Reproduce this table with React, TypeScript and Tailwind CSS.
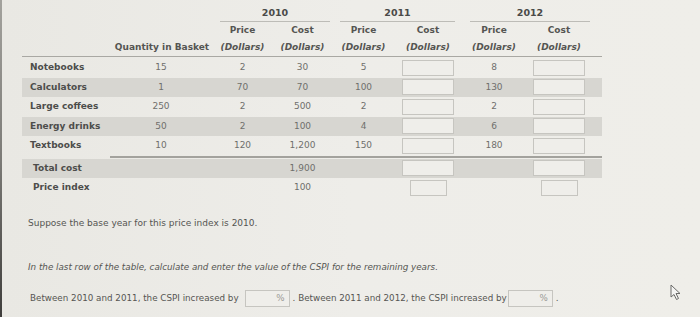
import React from 'react';

// one row of the basket table: label, quantity, then price/cost for each year
type Cell = string | 'box' | 'small' | '';

interface RowData {
    label: string;
    cells: Cell[];
    shaded?: boolean;
}

const ROWS: RowData[] = [
    { label: 'Notebooks', cells: ['15', '2', '30', '5', 'box', '8', 'box'] },
    { label: 'Calculators', cells: ['1', '70', '70', '100', 'box', '130', 'box'], shaded: true },
    { label: 'Large coffees', cells: ['250', '2', '500', '2', 'box', '2', 'box'] },
    { label: 'Energy drinks', cells: ['50', '2', '100', '4', 'box', '6', 'box'], shaded: true },
    { label: 'Textbooks', cells: ['10', '120', '1,200', '150', 'box', '180', 'box'] },
];

const SUMMARY: RowData[] = [
    { label: 'Total cost', cells: ['', '', '1,900', '', 'box', '', 'box'], shaded: true },
    { label: 'Price index', cells: ['', '', '100', '', 'small', '', 'small'] },
];

const GRID = 'grid grid-cols-[88px_102px_61px_59px_63px_66px_66px_70px]';

function Box({ small = false }: { small?: boolean }) {
    return (
        <div
            className={`${small ? 'w-[37px]' : 'w-[52px]'} h-[16px] border border-[#c6c5c0] bg-[#efeeea]`}
        />
    );
}

function TableRow({ row, summary = false }: { row: RowData; summary?: boolean }) {
    return (
        <div className={`${GRID} h-[19.5px] items-center ${row.shaded ? 'bg-[#d7d6d1]' : ''}`}>
            <div className={`${summary ? 'pl-[11px]' : 'pl-[8px]'} font-bold text-[#4d4d4b]`}>{row.label}</div>
            {row.cells.map((c, i) => (
                <div key={i} className={`flex justify-center text-[#6f6f6c] ${i === 6 ? 'pr-[6px]' : ''}`}>
                    {c === 'box' ? <Box /> : c === 'small' ? <Box small /> : c}
                </div>
            ))}
        </div>
    );
}

function PercentBox({ className = '' }: { className?: string }) {
    return (
        <span
            className={`inline-flex items-center justify-end w-[45px] h-[17px] border border-[#c6c5c0] bg-[#efeeea] pr-[4px] text-[#9a9a96] align-middle ${className}`}
        >
            %
        </span>
    );
}

export default function App() {
    return (
        <div className="flex w-[700px] h-[317px] overflow-hidden font-['DejaVu_Sans',sans-serif] text-[9px] leading-none">
            {/* dark bezel strip on the left */}
            <div className="w-[2px] shrink-0 bg-gradient-to-b from-[#a3a29d] via-[#7c7b77] to-[#3f3e3c]" />

            <div className="relative flex-1 bg-gradient-to-r from-[#e9e8e3] via-[#eeede9] to-[#efeee9]">
                <div className="pl-[20px] pt-[5px] w-[600px]">
                    {/* year groups */}
                    <div className={`${GRID} h-[17px] font-bold text-[#4a4a48] text-[9.5px]`}>
                        <div className="col-span-2" />
                        <div className="col-span-2 ml-[8px] mr-[2px] border-b border-[#bdbcb7] flex justify-center items-center">2010</div>
                        <div className="col-span-2 ml-[8px] mr-[6px] border-b border-[#bdbcb7] flex justify-center items-center">2011</div>
                        <div className="col-span-2 ml-[9px] mr-[7px] border-b border-[#bdbcb7] flex justify-center items-center">2012</div>
                    </div>
                    <div className={`${GRID} h-[17px] items-center font-bold text-[#555552]`}>
                        <div />
                        <div />
                        <div className="text-center">Price</div>
                        <div className="text-center">Cost</div>
                        <div className="text-center">Price</div>
                        <div className="text-center">Cost</div>
                        <div className="text-center">Price</div>
                        <div className="text-center pr-[6px]">Cost</div>
                    </div>
                    <div className={`${GRID} h-[18px] items-center border-b-[1.5px] border-[#a9a8a3] font-bold text-[#555552]`}>
                        <div />
                        <div className="text-center pl-[2px]">Quantity in Basket</div>
                        {[0, 1, 2, 3, 4, 5].map(i => (
                            <div key={i} className={`text-center italic ${i === 5 ? 'pr-[6px]' : ''}`}>(Dollars)</div>
                        ))}
                    </div>

                    <div className="pt-[1px]">
                        {ROWS.map(r => (
                            <TableRow key={r.label} row={r} />
                        ))}
                    </div>

                    {/* separator before totals */}
                    <div className="h-[3px] flex items-center">
                        <div className="ml-[88px] flex-1 border-t-2 border-[#a3a29d]" />
                    </div>

                    {SUMMARY.map(r => (
                        <TableRow key={r.label} row={r} summary />
                    ))}
                </div>

                <p className="mt-[21px] ml-[26px] text-[#555552]">Suppose the base year for this price index is 2010.</p>

                <p className="mt-[35px] ml-[26px] italic text-[8.75px] text-[#555552]">
                    In the last row of the table, calculate and enter the value of the CSPI for the remaining years.
                </p>

                <div className="mt-[19px] ml-[28px] flex items-center text-[8.75px] text-[#555552]">
                    <span>Between 2010 and 2011, the CSPI increased by</span>
                    <PercentBox className="ml-[6px] mr-[3px]" />
                    <span>. Between 2011 and 2012, the CSPI increased by</span>
                    <PercentBox className="ml-[1px] mr-[3px]" />
                    <span>.</span>
                </div>

                {/* mouse pointer */}
                <svg className="absolute left-[668px] top-[284px]" width="12" height="17" viewBox="0 0 12 17">
                    <path
                        d="M1 1 L1 13 L4 10.5 L6.5 15.5 L8.5 14.5 L6 9.5 L10 9.5 Z"
                        fill="#f4f4f2"
                        stroke="#6a6a68"
                        strokeWidth="1"
                        strokeLinejoin="round"
                    />
                </svg>
            </div>
        </div>
    );
}
